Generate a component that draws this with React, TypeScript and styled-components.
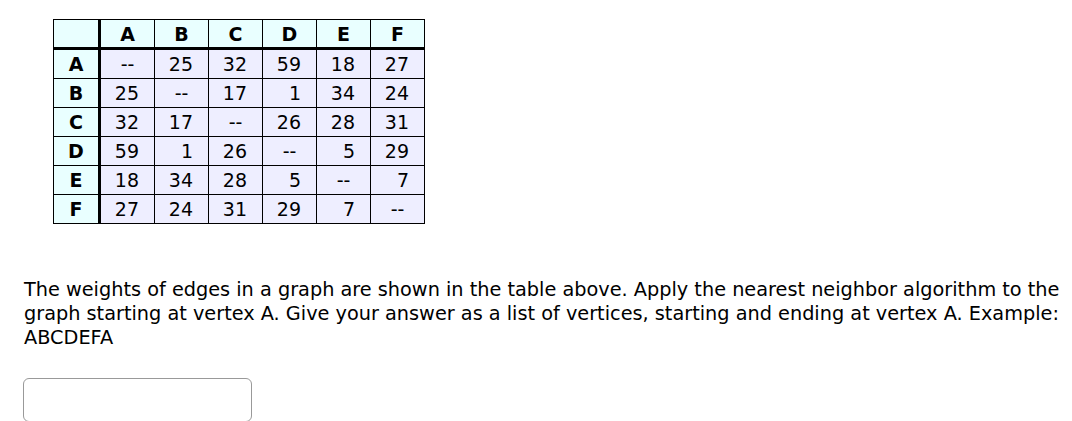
import styled, { createGlobalStyle } from "styled-components";

const GlobalStyle = createGlobalStyle`
  body {
    margin: 0;
    background: #ffffff;
    font-family: "DejaVu Sans", Verdana, sans-serif;
    color: #000;
  }
`;

const Page = styled.div`
  padding: 19px 0 0 24px;
`;

const TableWrap = styled.div`
  margin-left: 29px;
`;

const Grid = styled.table`
  border-collapse: collapse;
  font-size: 19px;
  border: 1px solid #000;
`;

const HeadCell = styled.th<{ $corner?: boolean }>`
  background: #e9ffff;
  width: ${(p) => (p.$corner ? "44px" : "53px")};
  height: 27px;
  padding: 0;
  line-height: 22px;
  font-weight: bold;
  text-align: center;
  border: 1px solid #000;
  border-bottom: 3px solid #000;
  ${(p) => (p.$corner ? "border-right: 3px solid #000;" : "")}
`;

const RowHead = styled.th`
  background: #e9ffff;
  height: 28px;
  padding: 0;
  line-height: 22px;
  font-weight: bold;
  text-align: center;
  border: 1px solid #000;
  border-right: 3px solid #000;
`;

const Cell = styled.td<{ $dash?: boolean }>`
  background: #eeeeff;
  height: 28px;
  padding: 0 ${(p) => (p.$dash ? "0" : "15px")} 0 0;
  line-height: 22px;
  text-align: ${(p) => (p.$dash ? "center" : "right")};
  border: 1px solid #000;
`;

const Question = styled.p`
  margin: 54px 2px 0 0;
  font-size: 19.3px;
  line-height: 24px;
`;

const Answer = styled.input`
  display: block;
  margin-top: 28px;
  width: 229px;
  height: 44px;
  margin-left: -1px;
  box-sizing: border-box;
  border: 1px solid #999;
  border-radius: 6px;
  background: #fff;
`;

const labels = ["A", "B", "C", "D", "E", "F"];
const weights: (number | null)[][] = [
  [null, 25, 32, 59, 18, 27],
  [25, null, 17, 1, 34, 24],
  [32, 17, null, 26, 28, 31],
  [59, 1, 26, null, 5, 29],
  [18, 34, 28, 5, null, 7],
  [27, 24, 31, 29, 7, null],
];

export default function App() {
  return (
    <>
      <GlobalStyle />
      <Page>
        <TableWrap>
          <Grid>
            <thead>
              <tr>
                <HeadCell $corner />
                {labels.map((l) => (
                  <HeadCell key={l}>{l}</HeadCell>
                ))}
              </tr>
            </thead>
            <tbody>
              {weights.map((row, i) => (
                <tr key={labels[i]}>
                  <RowHead>{labels[i]}</RowHead>
                  {row.map((w, j) => (
                    <Cell key={j} $dash={w === null}>
                      {w === null ? "--" : w}
                    </Cell>
                  ))}
                </tr>
              ))}
            </tbody>
          </Grid>
        </TableWrap>
        <Question>
          The weights of edges in a graph are shown in the table above. Apply the nearest neighbor algorithm to the
          graph starting at vertex A. Give your answer as a list of vertices, starting and ending at vertex A. Example:
          ABCDEFA
        </Question>
        <Answer type="text" />
      </Page>
    </>
  );
}
